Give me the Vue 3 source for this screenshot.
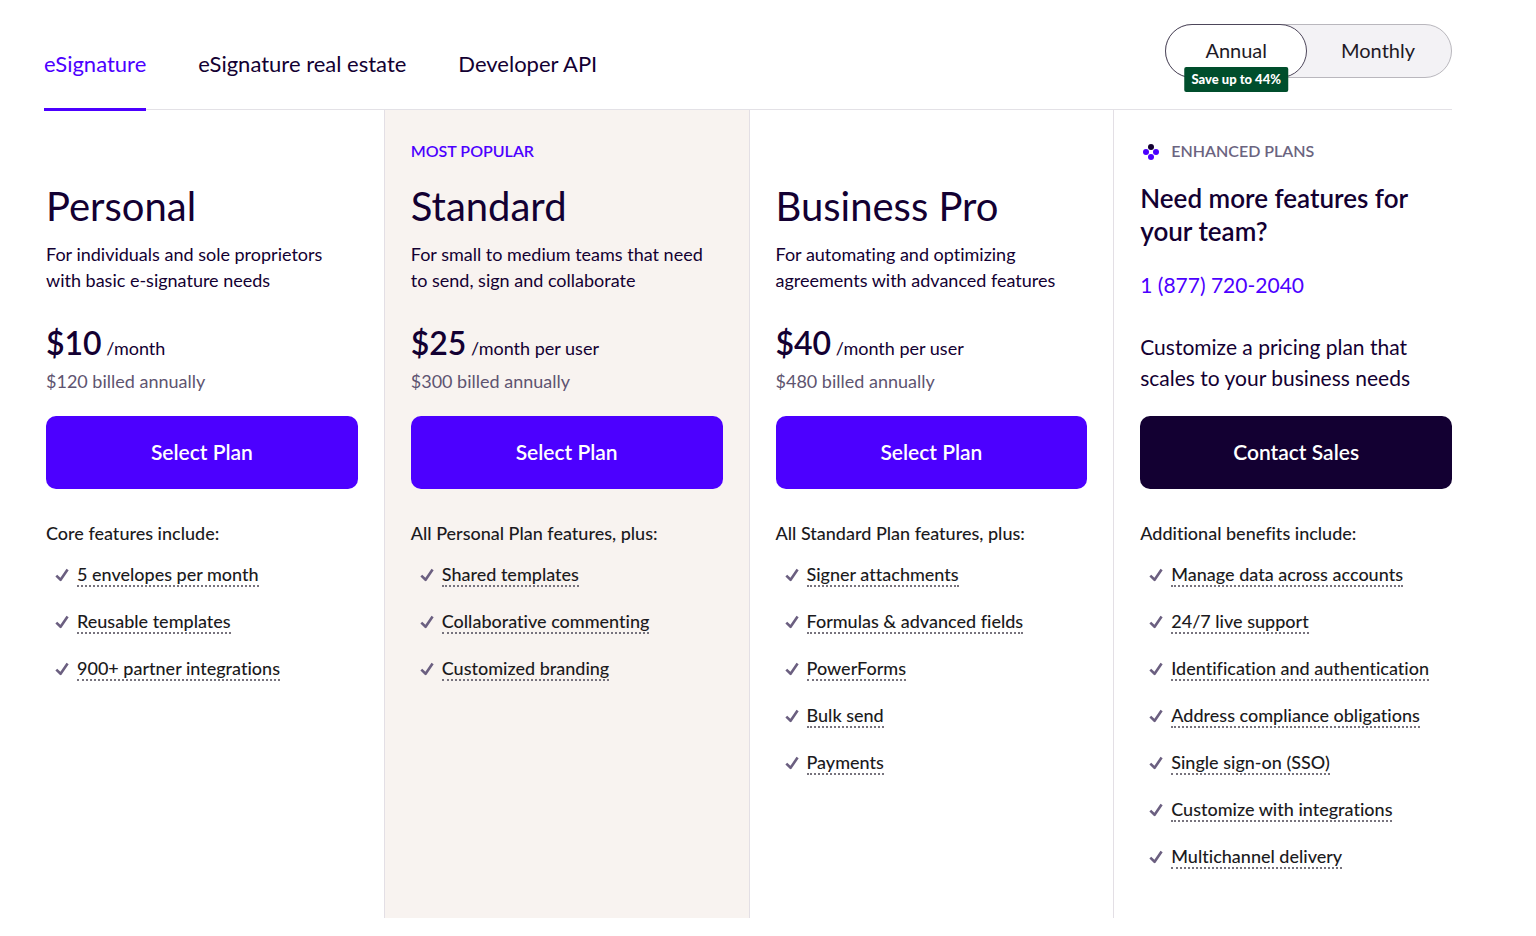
<script setup>
import { ref } from 'vue'

const tabs = ['eSignature', 'eSignature real estate', 'Developer API']
const activeTab = ref('eSignature')
const billing = ref('annual')

const plans = [
  {
    name: 'Personal',
    description: 'For individuals and sole proprietors with basic e-signature needs',
    price: '$10',
    unit: '/month',
    billed: '$120 billed annually',
    heading: 'Core features include:',
    features: ['5 envelopes per month', 'Reusable templates', '900+ partner integrations'],
  },
  {
    name: 'Standard',
    popular: true,
    description: 'For small to medium teams that need to send, sign and collaborate',
    price: '$25',
    unit: '/month per user',
    billed: '$300 billed annually',
    heading: 'All Personal Plan features, plus:',
    features: ['Shared templates', 'Collaborative commenting', 'Customized branding'],
  },
  {
    name: 'Business Pro',
    description: 'For automating and optimizing agreements with advanced features',
    price: '$40',
    unit: '/month per user',
    billed: '$480 billed annually',
    heading: 'All Standard Plan features, plus:',
    features: ['Signer attachments', 'Formulas & advanced fields', 'PowerForms', 'Bulk send', 'Payments'],
  },
  {
    enhanced: true,
    heading: 'Additional benefits include:',
    features: [
      'Manage data across accounts',
      '24/7 live support',
      'Identification and authentication',
      'Address compliance obligations',
      'Single sign-on (SSO)',
      'Customize with integrations',
      'Multichannel delivery',
    ],
  },
]
</script>

<template>
  <main class="pricing">
    <header class="topbar">
      <nav class="tabs" aria-label="Products">
        <a
          v-for="tab in tabs"
          :key="tab"
          href="#"
          class="tab"
          :class="{ active: tab === activeTab }"
          @click.prevent="activeTab = tab"
        >{{ tab }}</a>
      </nav>
      <div class="toggle" role="group" aria-label="Billing period">
        <button type="button" class="period" :class="{ on: billing === 'annual' }" @click="billing = 'annual'">
          Annual
          <span class="saving">Save up to 44%</span>
        </button>
        <button type="button" class="period" :class="{ on: billing === 'monthly' }" @click="billing = 'monthly'">
          Monthly
        </button>
      </div>
    </header>

    <div class="plans">
      <section v-for="plan in plans" :key="plan.heading" class="plan" :class="{ popular: plan.popular }">
        <div v-if="plan.enhanced" class="intro">
          <p class="eyebrow muted">
            <svg class="dots" viewBox="0 0 22 22" aria-hidden="true">
              <circle cx="11" cy="6" r="3" fill="#130032" />
              <circle cx="6" cy="11" r="3" fill="#4c00ff" />
              <circle cx="16" cy="11" r="3" fill="#4c00ff" />
              <circle cx="11" cy="16" r="3" fill="#4c00ff" />
            </svg>
            <span>ENHANCED PLANS</span>
          </p>
          <h2 class="question">Need more features for your team?</h2>
          <a class="phone" href="tel:18777202040">1 (877) 720-2040</a>
          <p class="custom">Customize a pricing plan that scales to your business needs</p>
        </div>
        <div v-else class="intro">
          <p class="eyebrow">{{ plan.popular ? 'MOST POPULAR' : '' }}</p>
          <h2 class="name">{{ plan.name }}</h2>
          <p class="description">{{ plan.description }}</p>
          <p class="price"><strong>{{ plan.price }}</strong> {{ plan.unit }}</p>
          <p class="billed">{{ plan.billed }}</p>
        </div>
        <button type="button" class="cta" :class="{ dark: plan.enhanced }">
          {{ plan.enhanced ? 'Contact Sales' : 'Select Plan' }}
        </button>
        <p class="heading">{{ plan.heading }}</p>
        <ul class="features">
          <li v-for="feature in plan.features" :key="feature">
            <svg class="check" viewBox="0 0 14 14" aria-hidden="true">
              <path d="M1.3 7.6 5.6 11.8 12.6 1.6" fill="none" stroke="#6b5f80" stroke-width="2.6" stroke-linejoin="round" />
            </svg>
            <span class="feature">{{ feature }}</span>
          </li>
        </ul>
      </section>
    </div>
  </main>
</template>

<style>
body {
  background: #fff;
}
</style>

<style scoped>
.pricing {
  padding: 0 84px 18px 44px;
  font-family: Lato, "Liberation Sans", sans-serif;
  font-variant-ligatures: none;
  color: #130032;
}

p,
h2,
ul {
  margin: 0;
  padding: 0;
}

.topbar {
  display: flex;
  justify-content: space-between;
  align-items: flex-start;
  height: 109px;
  border-bottom: 1px solid #e3e1e6;
}

.tabs {
  display: flex;
  gap: 52px;
  height: 111px;
}

.tab {
  box-sizing: border-box;
  padding-top: 50px;
  border-bottom: 3px solid transparent;
  font-size: 22px;
  line-height: 28px;
  color: inherit;
  text-decoration: none;
}

.tab.active {
  color: #4c00ff;
  border-color: #4c00ff;
}

.toggle {
  display: flex;
  box-sizing: border-box;
  height: 54px;
  margin-top: 24px;
  border: 1px solid #b9b7bd;
  border-radius: 27px;
  background: #f3f2f5;
}

.period {
  position: relative;
  padding: 0 35px 2px 34px;
  border: 1px solid transparent;
  border-radius: 27px;
  background: none;
  font: inherit;
  font-size: 20px;
  color: #1e1a26;
}

.period.on {
  margin: -1px;
  padding: 0 39px 2px;
  border-color: #4d465a;
  background: #fff;
}

.saving {
  position: absolute;
  top: 42px;
  left: 50%;
  transform: translateX(-50%);
  padding: 0 7px;
  border-radius: 2px;
  background: #004e2c;
  color: #fff;
  font-size: 13px;
  font-weight: 900;
  line-height: 25px;
  white-space: nowrap;
}

.plans {
  display: flex;
}

.plan {
  flex: 1 1 0;
  min-width: 0;
  padding: 30px 26px 27px;
  border-left: 1px solid #e3dfe5;
}

.plan:first-child {
  padding-left: 2px;
  border-left: 0;
}

.plan:last-child {
  padding-right: 0;
}

.popular {
  background: #f8f3f0;
}

.intro {
  height: 276px;
}

.eyebrow {
  display: flex;
  gap: 9px;
  height: 24px;
  font-size: 16px;
  font-weight: 600;
  line-height: 22px;
  color: #4c00ff;
}

.eyebrow.muted {
  color: #6b6480;
}

.dots {
  width: 22px;
  height: 24px;
}

.name {
  margin-top: 17px;
  font-size: 40px;
  font-weight: 400;
  line-height: 50px;
}

.description {
  margin-top: 10px;
  font-size: 18px;
  line-height: 26px;
}

.price {
  margin-top: 28px;
  font-size: 18px;
  line-height: 44px;
}

.price strong {
  font-size: 32px;
  font-weight: 600;
}

.billed {
  margin-top: -2px;
  font-size: 18px;
  line-height: 26px;
  color: #5e5470;
}

.question {
  margin-top: 18px;
  font-size: 26px;
  font-weight: 600;
  line-height: 33px;
}

.phone {
  display: block;
  margin-top: 23px;
  font-size: 21px;
  line-height: 28px;
  color: #4c00ff;
  text-decoration: none;
}

.custom {
  margin-top: 32px;
  font-size: 21px;
  line-height: 31px;
}

.cta {
  display: block;
  width: 100%;
  height: 73px;
  padding: 0 0 2px;
  border: 0;
  border-radius: 10px;
  background: #4c00ff;
  color: #fff;
  font: inherit;
  font-size: 21px;
  font-weight: 600;
}

.cta.dark {
  background: #130032;
}

.heading {
  margin-top: 32px;
  font-size: 18px;
  font-weight: 500;
  line-height: 24px;
  color: #1b1a20;
}

.features {
  margin-top: 17px;
  list-style: none;
}

.features li {
  display: flex;
  gap: 8px;
  height: 47px;
  padding-left: 9px;
}

.check {
  flex: none;
  width: 14px;
  height: 14px;
  margin-top: 6px;
}

.feature {
  height: 23px;
  border-bottom: 2px dotted #77737d;
  font-size: 18px;
  font-weight: 500;
  line-height: 24px;
  white-space: nowrap;
  color: #1b1a20;
}
</style>
